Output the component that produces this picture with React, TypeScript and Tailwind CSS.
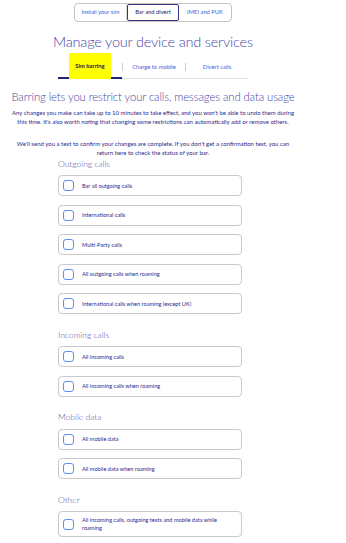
import React from 'react';

const sections = [
  {
    title: 'Outgoing calls',
    items: [
      'Bar all outgoing calls',
      'International calls',
      'Multi-Party calls',
      'All outgoing calls when roaming',
      'International calls when roaming (except UK)',
    ],
  },
  {
    title: 'Incoming calls',
    items: ['All incoming calls', 'All incoming calls when roaming'],
  },
  {
    title: 'Mobile data',
    items: ['All mobile data', 'All mobile data when roaming'],
  },
  {
    title: 'Other',
    items: ['All incoming calls, outgoing texts and mobile data while roaming'],
  },
];

const Option: React.FC<{ label: string }> = ({ label }) => (
  <label className="flex items-center w-[184px] min-h-[21px] border border-[#c9c9c9] rounded-[4px] pl-[4px] pr-[20px] py-[4px] bg-white">
    <span className="w-[11px] h-[11px] shrink-0 rounded-[3px] border-[1.5px] border-[#5d8ef7]" />
    <span className="ml-[8px] text-[5.6px] leading-[8px] text-[#2b2b8c]">{label}</span>
  </label>
);

export default function App() {
  return (
    <div className="w-[346px] min-h-[543px] bg-white flex flex-col" style={{ fontFamily: 'Lato, "Open Sans", sans-serif' }}>
      <div className="w-[306px] flex flex-col items-center">
        {/* top segmented nav */}
        <div className="mt-[3px] flex h-[19px] border border-[#c4c4c4] rounded-[4px] overflow-hidden">
          <div className="w-[52px] flex items-center justify-center text-[5.8px] text-[#3f5fd6] border-r border-[#dcdcdc]">Install your sim</div>
          <div className="w-[52px] flex items-center justify-center text-[5.8px] text-[#1d1d5c] border border-[#35357f] rounded-[2px]">Bar and divert</div>
          <div className="w-[52px] flex items-center justify-center text-[5.8px] text-[#3f5fd6]">IMEI and PUK</div>
        </div>

        <h1 className="mt-[11px] text-[14.5px] leading-[18px] font-light text-[#4646a6] tracking-[-0.2px]">Manage your device and services</h1>

        {/* sub tabs */}
        <div className="mt-[5px] w-[190px] flex items-end border-b border-[#e3e3e3]">
          <div className="w-[64px] h-[22px] flex justify-center border-b-[2px] border-[#22227a] -mb-[1px]">
            <span className="w-[42px] h-[26px] -mt-[4px] bg-[#ffff00] flex items-center justify-center text-[5.8px] font-bold text-[#1d1d3f]">Sim barring</span>
          </div>
          <div className="h-[22px] flex items-center">
            <span className="w-px h-[8px] bg-[#cfcfcf]" />
          </div>
          <div className="w-[62px] h-[22px] flex items-center justify-center text-[5.8px] text-[#3f5fd6]">Charge to mobile</div>
          <div className="h-[22px] flex items-center">
            <span className="w-px h-[8px] bg-[#cfcfcf]" />
          </div>
          <div className="w-[62px] h-[22px] flex items-center justify-center text-[5.8px] text-[#3f5fd6]">Divert calls</div>
        </div>

        <h2 className="mt-[11px] text-[11.3px] leading-[14px] font-light text-[#4646a6] tracking-[-0.1px]">
          Barring lets you restrict your calls, messages and data usage
        </h2>

        <p className="mt-[4px] w-[290px] text-center text-[6px] leading-[9px] text-[#2b2b8c]">
          Any changes you make can take up to 10 minutes to take effect, and you won't be able to undo them during this time. It's also worth noting that changing some restrictions can automatically add or remove others.
        </p>
        <p className="mt-[13px] w-[276px] text-center text-[6px] leading-[9px] text-[#2b2b8c]">
          We'll send you a text to confirm your changes are complete. If you don't get a confirmation text, you can return here to check the status of your bar.
        </p>

        <div className="-mt-[5px] self-start ml-[58px] w-[184px] flex flex-col">
          {sections.map((s) => (
            <div key={s.title} className="flex flex-col">
              <h3 className="mt-[3px] h-[18px] flex items-center text-[8.5px] font-light text-[#5555a8]">{s.title}</h3>
              <div className="mt-[2px] flex flex-col gap-[8.5px]">
                {s.items.map((it) => (
                  <Option key={it} label={it} />
                ))}
              </div>
              <div className="h-[9px]" />
            </div>
          ))}
        </div>
      </div>
      <div className="mt-auto h-[3px] bg-[#f3f3f3]" />
    </div>
  );
}
